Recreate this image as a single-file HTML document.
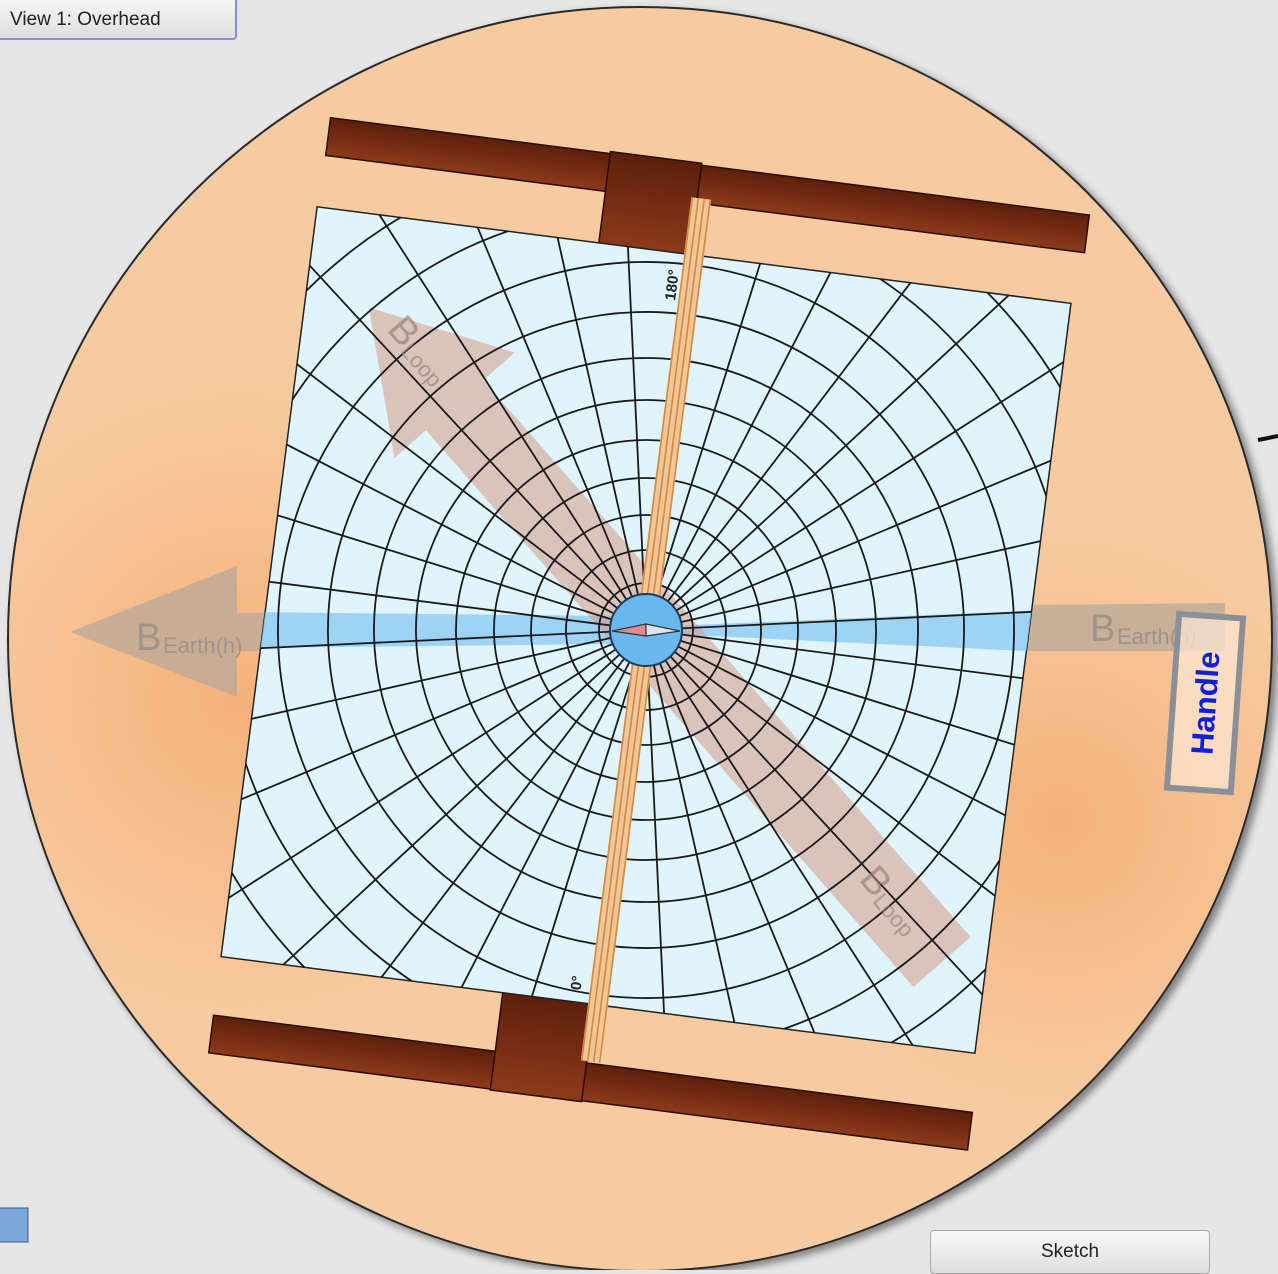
<!DOCTYPE html>
<html><head><meta charset="utf-8"><style>
html,body{margin:0;padding:0;width:1278px;height:1270px;overflow:hidden;background:#e6e6e6;font-family:"Liberation Sans",sans-serif}
.btn{position:absolute;background:linear-gradient(#f8f8f8,#dedede);border:1px solid #a9a9a9;border-radius:4px;color:#222;font-size:19px;text-align:center;box-sizing:border-box}
</style></head><body>
<svg width="1278" height="1270" style="position:absolute;left:0;top:0">
<defs>
<radialGradient id="b1" cx="240" cy="700" r="330" gradientUnits="userSpaceOnUse"><stop offset="0" stop-color="#f4b27a"/><stop offset="1" stop-color="#f4b27a" stop-opacity="0"/></radialGradient>
<radialGradient id="b2" cx="1060" cy="820" r="300" gradientUnits="userSpaceOnUse"><stop offset="0" stop-color="#f4b27a"/><stop offset="1" stop-color="#f4b27a" stop-opacity="0"/></radialGradient>
<linearGradient id="br" x1="0" y1="0" x2="0" y2="1"><stop offset="0" stop-color="#5c1f0c"/><stop offset="1" stop-color="#8e3a1a"/></linearGradient>
<clipPath id="sq"><rect x="-380" y="-378" width="760" height="756"/></clipPath>
<line id="rl" x1="0" y1="-620" x2="0" y2="620" stroke="#1a1a1a" stroke-width="1.8"/>
<filter id="sh" x="-5%" y="-5%" width="110%" height="110%"><feDropShadow dx="5" dy="4" stdDeviation="4" flood-color="#000" flood-opacity="0.45"/></filter>
</defs>
<line x1="1258" y1="440" x2="1278" y2="436" stroke="#111" stroke-width="4"/>
<circle cx="640" cy="639" r="632" fill="#f7cba2" stroke="#2a2a2a" stroke-width="2" filter="url(#sh)"/>
<circle cx="640" cy="639" r="631" fill="url(#b1)"/>
<circle cx="640" cy="639" r="631" fill="url(#b2)"/>
<path d="M70,632 L237,566 L237,613 L1225,603 L1225,651 L237,651 L237,697 Z" fill="#b8a898" opacity="0.75"/>
<g transform="translate(646,630) rotate(7.3)">
 <rect x="-378" y="-468" width="765" height="38" fill="url(#br)" stroke="#2a0e05" stroke-width="1.5"/>
 <rect x="-380" y="437" width="765" height="38" fill="url(#br)" stroke="#2a0e05" stroke-width="1.5"/>
 <rect x="-96" y="-470" width="92" height="94" fill="url(#br)" stroke="#2a0e05" stroke-width="1.5"/>
 <rect x="-96" y="376" width="92" height="100" fill="url(#br)" stroke="#2a0e05" stroke-width="1.5"/>
 <rect x="-380" y="-378" width="760" height="756" fill="#e0f4fc" stroke="#222" stroke-width="1.5"/>
</g>
<g transform="translate(646,630) rotate(7.3)" clip-path="url(#sq)">
 <g transform="rotate(-7.3)"><path d="M-400,-18 L-30,-14 L0,-3 L400,-20 L400,22 L0,3 L-30,14 L-400,18 Z" fill="#8ccbf2" opacity="0.8"/></g>
</g>
<g transform="translate(942,962) rotate(-131.2)" opacity="0.55">
 <path d="M0,-38 L740,-38 L740,-80 L870,0 L740,80 L740,38 L0,38 Z" fill="#d39a85"/>
</g>
<g transform="translate(646,630) rotate(7.3)" clip-path="url(#sq)" fill="none" stroke="#1a1a1a" stroke-width="1.8">
 <use href="#rl"/><use href="#rl" transform="rotate(10)"/><use href="#rl" transform="rotate(20)"/><use href="#rl" transform="rotate(30)"/><use href="#rl" transform="rotate(40)"/><use href="#rl" transform="rotate(50)"/><use href="#rl" transform="rotate(60)"/><use href="#rl" transform="rotate(70)"/><use href="#rl" transform="rotate(80)"/><use href="#rl" transform="rotate(90)"/><use href="#rl" transform="rotate(100)"/><use href="#rl" transform="rotate(110)"/><use href="#rl" transform="rotate(120)"/><use href="#rl" transform="rotate(130)"/><use href="#rl" transform="rotate(140)"/><use href="#rl" transform="rotate(150)"/><use href="#rl" transform="rotate(160)"/><use href="#rl" transform="rotate(170)"/>
 <circle r="47"/><circle r="80"/><circle r="115"/><circle r="152"/><circle r="190"/><circle r="230"/><circle r="272"/><circle r="318"/><circle r="368"/><circle r="422"/><circle r="480"/><circle r="542"/>
</g>
<g transform="translate(646,630) rotate(7.3)">
 <rect x="-10" y="-435" width="20" height="870" fill="#f1c79a"/>
 <g stroke="#d5893f" stroke-width="1.6"><line x1="-9" y1="-435" x2="-9" y2="435"/><line x1="-3" y1="-435" x2="-3" y2="435"/><line x1="3" y1="-435" x2="3" y2="435"/><line x1="9" y1="-435" x2="9" y2="435"/></g>
 <text transform="translate(-13,-330) rotate(-90)" font-size="15" font-weight="bold" fill="#222">180°</text>
 <text transform="translate(-19,366) rotate(-90)" font-size="15" font-weight="bold" fill="#222">0°</text>
</g>
<circle cx="646" cy="630" r="36" fill="#6ab8ee" stroke="#1c3c60" stroke-width="2"/>
<path d="M612,631 L646,624 L646,636 Z" fill="#e08a90" stroke="#333" stroke-width="1.2"/>
<path d="M680,631 L646,624 L646,636 Z" fill="#dde6ee" stroke="#333" stroke-width="1.2"/>
<g fill="#9a8f88" opacity="0.85">
<text x="136" y="650" font-size="38">B</text><text x="163" y="653" font-size="22">Earth(h)</text>
<text x="1090" y="641" font-size="38">B</text><text x="1117" y="644" font-size="22">Earth(h)</text>
</g>
<g fill="#9c7f75" opacity="0.7">
<text transform="translate(386,330) rotate(48.8)" font-size="38">B<tspan font-size="22" dy="4">Loop</tspan></text>
<text transform="translate(858,880) rotate(48.8)" font-size="38">B<tspan font-size="22" dy="4">Loop</tspan></text>
</g>
<g transform="translate(1205,703) rotate(4)">
 <rect x="-32" y="-87" width="64" height="174" fill="#fbe4d0" fill-opacity="0.75" stroke="#8b9098" stroke-width="6"/>
 <text transform="rotate(-90)" x="0" y="11" text-anchor="middle" font-size="31" font-weight="bold" fill="#1020d8">Handle</text>
</g>
<rect x="-2" y="1208" width="30" height="34" fill="#7aa7d8" stroke="#3a5c8a"/>
</svg>
<div class="btn" style="left:-4px;top:-4px;width:241px;height:44px;line-height:44px;border:2px solid #8a8ae0;text-align:left;padding-left:12px">View 1: Overhead</div>
<div class="btn" style="left:930px;top:1230px;width:280px;height:44px;line-height:42px">Sketch</div>
</body></html>
